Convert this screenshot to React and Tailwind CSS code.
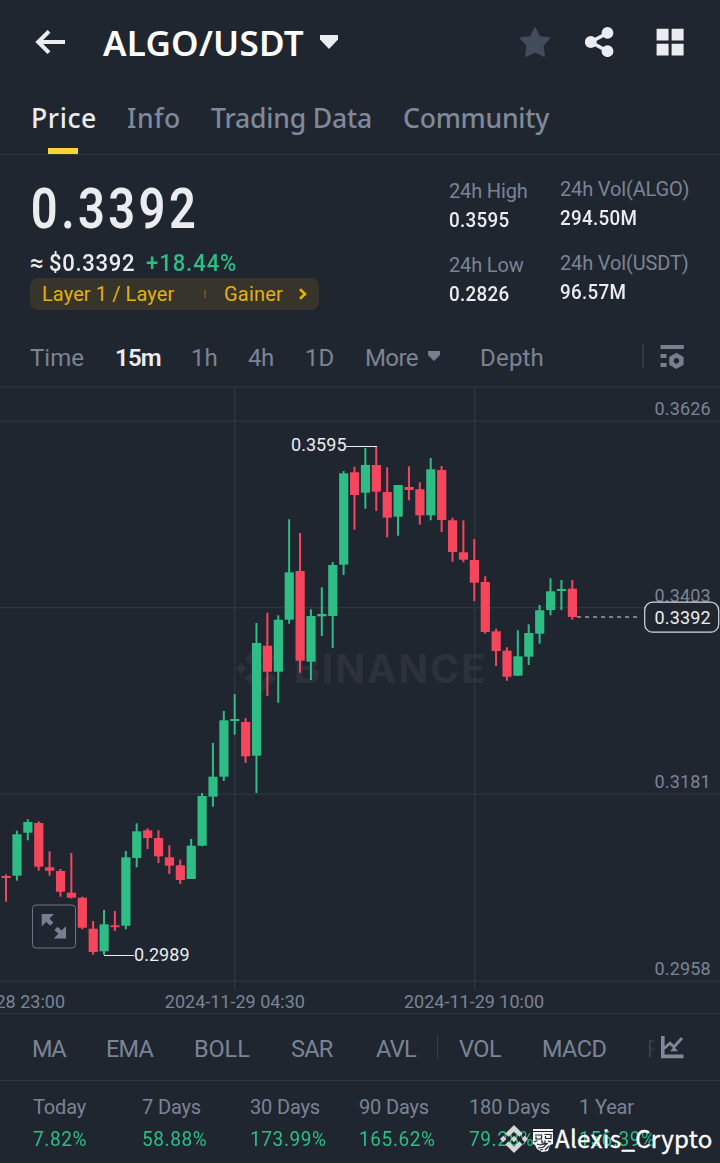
import React from "react";
import { SiBinance } from "react-icons/si";

const UP = "#2ebd85";
const DOWN = "#f6465d";

// [direction, high, body top, body bottom, low]
const CANDLES = [
  [0, 874.5, 876, 878, 901.7], [1, 830.7, 834.3, 875.7, 880.7], [1, 819.3, 822, 832.7, 840.3],
  [0, 821.3, 823, 866.7, 870.7], [0, 851.3, 867.3, 870.7, 875.7], [0, 869, 871, 891.7, 896.7],
  [0, 853, 892.7, 897.7, 898.5], [0, 896.7, 897.7, 927.7, 929.3], [0, 921, 928.7, 952, 954.7],
  [1, 910, 924.3, 951.3, 955], [0, 911, 925.3, 927.2, 931], [1, 851, 857.3, 925.7, 929.3],
  [1, 823.3, 831.3, 858, 867.3], [0, 828.3, 830.3, 838, 849], [0, 830.3, 838, 856.3, 863],
  [0, 845.3, 857.3, 865.7, 874], [0, 859.7, 865.3, 880, 884], [1, 839, 845.7, 879, 879],
  [1, 793, 796, 845.7, 846.3], [1, 743, 776.7, 796.7, 806.7], [1, 711, 720.3, 776.7, 781],
  [1, 694, 719, 721, 734.7], [0, 718, 722, 756.3, 763], [1, 623, 643, 755.7, 793],
  [0, 612.7, 645.7, 671.7, 696], [1, 615.3, 619.7, 671.7, 702.7], [1, 519.3, 572.3, 619.7, 623.7],
  [0, 533, 571, 660.7, 672.7], [1, 609.3, 616, 661.7, 680], [1, 587.3, 614, 616.3, 636],
  [1, 562, 565, 616, 648], [1, 471, 473.3, 564.7, 575], [0, 466.7, 472.3, 495, 529.7],
  [1, 448, 465, 492.7, 508.7], [0, 446.3, 465, 491.7, 511], [0, 467.3, 492, 517.7, 537.3],
  [1, 485, 485, 516.7, 535.7], [0, 466.3, 487, 490, 500.3], [0, 482.3, 489.3, 515.3, 524.7],
  [1, 458, 469.3, 515.3, 520.3], [0, 466, 470, 520, 532], [0, 517.7, 520.3, 552, 561.7],
  [0, 520.3, 552.3, 559.7, 562.3], [0, 539, 560, 582.7, 601], [0, 576.3, 582, 632, 633.7],
  [0, 628.7, 631.3, 651, 666], [0, 647.3, 650.7, 676.7, 680.7], [1, 630.3, 656.3, 675.7, 676],
  [1, 624.3, 633, 656.7, 665], [1, 605, 610.3, 633.7, 643.7], [1, 578.3, 591.3, 610, 615.3],
  [1, 580, 589, 591, 610], [0, 580, 588.7, 617, 619.7],
];

function Header() {
  return (
    <header className="flex h-[84px] shrink-0 items-center pl-[35px]">
      <svg className="w-[30px] h-[24px] shrink-0" viewBox="0 0 30 24" fill="none" stroke="#eaecef" strokeWidth="4">
        <path d="M14 1.3 3.2 12 14 22.7M2.5 12H30" />
      </svg>
      <h1 className="ml-[38px] w-[217px] pt-[2px] font-['Noto_Sans'] text-[35px] font-semibold leading-[42px] tracking-[0.25px] text-white">ALGO/USDT</h1>
      <svg className="-mt-px w-[18px] h-[14px] shrink-0" viewBox="0 0 18 14" fill="#eaecef"><path d="M0 0H18V4.5L9 14 0 4.5Z" /></svg>
      <svg className="ml-[182px] w-[30px] h-[30px] shrink-0" viewBox="0 0 30 30" fill="#434c5a" stroke="#434c5a" strokeWidth="2" strokeLinejoin="round">
        <path d="M15 1.5 19.2 10 29 11.2 22.5 18.3 24 28.8 15 24.6 6 28.8 7.5 18.3 1 11.2 10.8 10Z" />
      </svg>
      <svg className="ml-[35px] w-[30px] h-[30px] shrink-0" viewBox="0 0 30 30" fill="#eaecef" stroke="#eaecef">
        <path d="M22.5 6 5.8 15 22.5 24.3" fill="none" strokeWidth="3.6" />
        <g stroke="none"><circle cx="5.8" cy="15" r="5.9" /><circle cx="22.5" cy="5.9" r="5.9" /><circle cx="22.5" cy="24.2" r="5.9" /></g>
      </svg>
      <svg className="ml-[41px] w-[28px] h-[28px] shrink-0" viewBox="0 0 28 28" fill="#eaecef">
        <path d="M.6.8h12v11.8h-12zM15.6.8h12v11.8h-12zM.6 15.8h12v11.8h-12zM15.6 15.8h12v11.8h-12z" />
      </svg>
    </header>
  );
}

function Tabs() {
  return (
    <nav className="flex h-[71px] shrink-0 border-b border-[#2f3640] pl-[31px] font-['Noto_Sans'] text-[26.6px] font-medium leading-[68px] text-[#7f899a] whitespace-nowrap">
      <div className="flex w-[96px] flex-col justify-between">
        <span className="h-[64px] tracking-[0.6px] text-[#eaecef]">Price</span>
        <span className="ml-[17px] h-[6px] w-[30px] bg-[#fcd535]" />
      </div>
      <span className="w-[84px] tracking-[0.5px]">Info</span>
      <span className="w-[192px] tracking-[-0.2px]">Trading Data</span>
      <span className="tracking-[-0.25px]">Community</span>
    </nav>
  );
}

function Stat({ label, value }) {
  return (
    <div className="flex h-[74px] flex-col text-[20px] leading-[29px] whitespace-nowrap">
      <span className="tracking-[-0.15px] text-[#7b8494]">{label}</span>
      <span className="origin-left scale-x-[0.94] font-medium tracking-[0.35px] text-[#eaecef]">{value}</span>
    </div>
  );
}

function Summary() {
  return (
    <section className="flex h-[171px] shrink-0">
      <div className="flex w-[449px] flex-col items-start pl-[30px] pt-[22px]">
        <div className="h-[64px] origin-left scale-x-[0.84] pl-[1px] text-[56px] font-semibold leading-[65px] tracking-[4.1px] text-[#eaecef]">0.3392</div>
        <div className="flex h-[37px] items-center gap-[11px] text-[24px] font-medium leading-[36px] tracking-[-0.3px] pt-[7px] whitespace-nowrap">
          <span className="text-[#eaecef] w-[105px]">≈ <span className="inline-block origin-left scale-x-[0.92] tracking-[0.75px]">$0.3392</span></span>
          <span className="origin-left scale-x-[0.92] tracking-[1px] text-[#2ebd85]">+18.44%</span>
        </div>
        <div className="flex h-[32px] w-[289px] shrink-0 items-center rounded-[8px] bg-[#37342c] pl-[12px] text-[20px] leading-[32px] text-[#e5b00c] whitespace-nowrap">
          <span className="w-[162px] tracking-[0.1px]">Layer 1 / Layer</span>
          <span className="h-[8px] w-[2px] bg-[#66541b]" />
          <span className="ml-[18px] w-[75px] tracking-[0.2px]">Gainer</span>
          <svg className="w-[8px] h-[12px]" viewBox="0 0 8 12" fill="none" stroke="#e5b00c" strokeWidth="2.6"><path d="M1 1.2 6 6 1 10.8" /></svg>
        </div>
      </div>
      <div className="w-[111px] pt-[22px]">
        <Stat label="24h High" value="0.3595" />
        <Stat label="24h Low" value="0.2826" />
      </div>
      <div className="pt-[20px]">
        <Stat label="24h Vol(ALGO)" value="294.50M" />
        <Stat label="24h Vol(USDT)" value="96.57M" />
      </div>
    </section>
  );
}

function Intervals() {
  return (
    <div className="flex h-[62px] shrink-0 items-center border-b-2 border-[#282e38] pl-[30px] pt-[3px] text-[24px] text-[#7b8494] whitespace-nowrap">
      <span className="w-[85px]">Time</span>
      <span className="w-[76px] font-semibold tracking-[-0.8px] text-[#eaecef]">15m</span>
      <span className="w-[57px]">1h</span>
      <span className="w-[57px] tracking-[-0.6px]">4h</span>
      <span className="w-[60px]">1D</span>
      <span className="w-[63px] tracking-[-0.6px]">More</span>
      <svg className="w-[12px] h-[10px] -mt-1" viewBox="0 0 12 10" fill="#76808f"><path d="M0 0H12V4L6 10 0 4Z" /></svg>
      <span className="ml-[40px] w-[162px] tracking-[0.2px]">Depth</span>
      <span className="-mt-[3px] h-[24px] w-[2px] bg-[#333a45]" />
      <svg className="ml-[16px] -mt-px w-[24px] h-[24px]" viewBox="0 0 24 24" fill="#76808f">
        <path d="M.5 0h23.300v4H.5zM.5 9h6v4h-6zM.5 18h6v4h-6z" />
        <path fillRule="evenodd" d="M16.400 7.800 23.600 12V19.800L16.400 24 9.200 19.800V12ZM16.400 13.100a2.800 2.800 0 1 0 .01 0Z" />
      </svg>
    </div>
  );
}

function Chart() {
  return (
    <svg className="block h-[625px] w-[720px] shrink-0 font-['Roboto']" viewBox="0 388 720 625" fontSize="18">
      <g fill="#2d313b">
        <SiBinance x="235" y="643" size="51" color="#2d313b" />
        <text x="294" y="682.500" fontSize="39" fontWeight="700" fontFamily="Inter" textLength="191">BINANCE</text>
      </g>
      <g fill="#2f3540">
        {[420.5, 607, 793.500, 980.500].map((y) => <rect key={y} x="0" y={y} width="720" height="1.3" />)}
        {[234, 474].map((x) => <rect key={x} x={x} y="388" width="1.3" height="603" />)}
      </g>
      {CANDLES.map(([up, high, top, bottom, low], i) => {
        const x = 6 + 10.89 * i;
        return (
          <g key={i} fill={up ? UP : DOWN}>
            <rect x={x - 1} y={high} width="2" height={low - high} />
            <rect x={x - 4.5} y={top} width="9.2" height={bottom - top} />
          </g>
        );
      })}
      <path d="M346 446.500H377M104 955.500H134" stroke="#eaecef" strokeWidth="1.2" />
      <path d="M577 617H638" stroke="#9a9fa8" strokeWidth="1.5" strokeDasharray="4 4" />
      <g fill="#eaecef">
        <text x="291" y="451" textLength="55.500">0.3595</text>
        <text x="134" y="961" textLength="55.500">0.2989</text>
      </g>
      <g fill="#7b8494">
        <text x="654.500" y="415" textLength="56">0.3626</text>
        <text x="654.500" y="602" textLength="56">0.3403</text>
        <text x="654.500" y="788" textLength="56">0.3181</text>
        <text x="654.500" y="975" textLength="56">0.2958</text>
        <text x="65" y="1008" textAnchor="end">2024-11-28 23:00</text>
        <text x="164.800" y="1008">2024-11-29 04:30</text>
        <text x="404" y="1008">2024-11-29 10:00</text>
      </g>
      <rect x="644.700" y="602.200" width="74" height="30" rx="8" fill="#202630" stroke="#d5d8dd" strokeWidth="1.2" />
      <text x="654.500" y="624" textLength="56" fill="#eaecef">0.3392</text>
      <rect x="32.500" y="905" width="43" height="43" rx="3.500" fill="#202630" stroke="#6b7485" />
      <g fill="#76808f">
        <path d="M41.700 914H54L41.700 926.500ZM66 938.500H53.700L66 926Z" />
        <path d="M44.500 917 51.800 924.200M56 928.300 63.500 935.700" stroke="#76808f" strokeWidth="4.600" />
      </g>
    </svg>
  );
}

function Indicators() {
  return (
    <div className="flex h-[68px] shrink-0 items-center border-y border-[#2f3640] pl-[32px] pt-[5px] text-[23.500px] tracking-[-0.8px] text-[#7b8494] whitespace-nowrap">
      <span className="w-[74px] tracking-[-1.500px]">MA</span>
      <span className="w-[88px]">EMA</span>
      <span className="w-[97px] tracking-[-0.1px]">BOLL</span>
      <span className="w-[85px]">SAR</span>
      <span className="w-[61px] tracking-[-0.6px]">AVL</span>
      <span className="-mt-[5px] h-[24px] w-px bg-[#363d48]" />
      <span className="ml-[21px] w-[83px] tracking-[-0.5px]">VOL</span>
      <span className="w-[105px] tracking-[-0.6px]">MACD</span>
      <span className="mr-[2px] w-[12px] overflow-hidden bg-linear-to-r from-[#444c58] to-[#202630] to-80% bg-clip-text text-transparent">R</span>
      <svg className="-mt-[5px] w-[23px] h-[23px]" viewBox="0 0 23 23" fill="none" stroke="#7f899a">
        <path d="M1.800 0V20.400H22.500" strokeWidth="3.600" />
        <path d="M3 12.500 9 7.200 13 11 21 2" strokeWidth="2.800" />
        <path d="M13 10.500 17 15.200H9Z" fill="#7f899a" stroke="none" />
      </svg>
    </div>
  );
}

const RETURNS = [
  ["Today", "7.82%", "w-[109px]"],
  ["7 Days", "58.88%", "w-[108px]"],
  ["30 Days", "173.99%", "w-[109px]"],
  ["90 Days", "165.62%", "w-[110px]"],
  ["180 Days", "79.28%", "w-[110px]"],
  ["1 Year", "156.39%", "w-[100px]"],
];

function Returns() {
  return (
    <div className="relative flex h-[82px] shrink-0 pl-[33px] pt-[10px] text-[20px] leading-[32px] tracking-[-0.15px] whitespace-nowrap">
      {RETURNS.map(([label, value, width]) => (
        <div key={label} className={`flex flex-col ${width}`}>
          <span className="text-[#7b8494]">{label}</span>
          <span className="origin-left scale-x-[0.95] tracking-[0.65px] text-[#2ebd85]">{value}</span>
        </div>
      ))}
      <div className="absolute left-[500px] top-[41px] flex h-[34px] items-center text-white">
        <SiBinance size={28} color="#d6d6d6" />
        <svg className="ml-[5px] mt-[3px] w-[20px] h-[23px] shrink-0" viewBox="0 0 20 23" fill="none">
          <path d="M0 0H20V15L17 16 15 22 9 23 4 20 2 16 0 15Z" fill="#f4f4f4" />
          <path stroke="#20262f" strokeWidth="1.2" d="M0 2.500H20M2 6H8.500V10H3V7.500M11.500 5.500H18V9.500H12.500V7M1 13 4.500 11.500M9 11V14H12V11.500M15 12 18 13M4 15 7 16 14 14.500 10 18.500 5 19M12 21 16 17M7 21 10 20.500" />
        </svg>
        <span className="-mt-[2px] ml-[2px] font-['Noto_Sans_CJK_SC'] text-[24px] font-normal leading-[34px] tracking-[0.35px] [-webkit-text-stroke:0.35px_white]">Alexis_Crypto</span>
      </div>
    </div>
  );
}

export default function App() {
  return (
    <main className="flex h-[1163px] w-[720px] flex-col overflow-hidden bg-[#202630] font-['Roboto',sans-serif]">
      <Header />
      <Tabs />
      <Summary />
      <Intervals />
      <Chart />
      <Indicators />
      <Returns />
    </main>
  );
}
